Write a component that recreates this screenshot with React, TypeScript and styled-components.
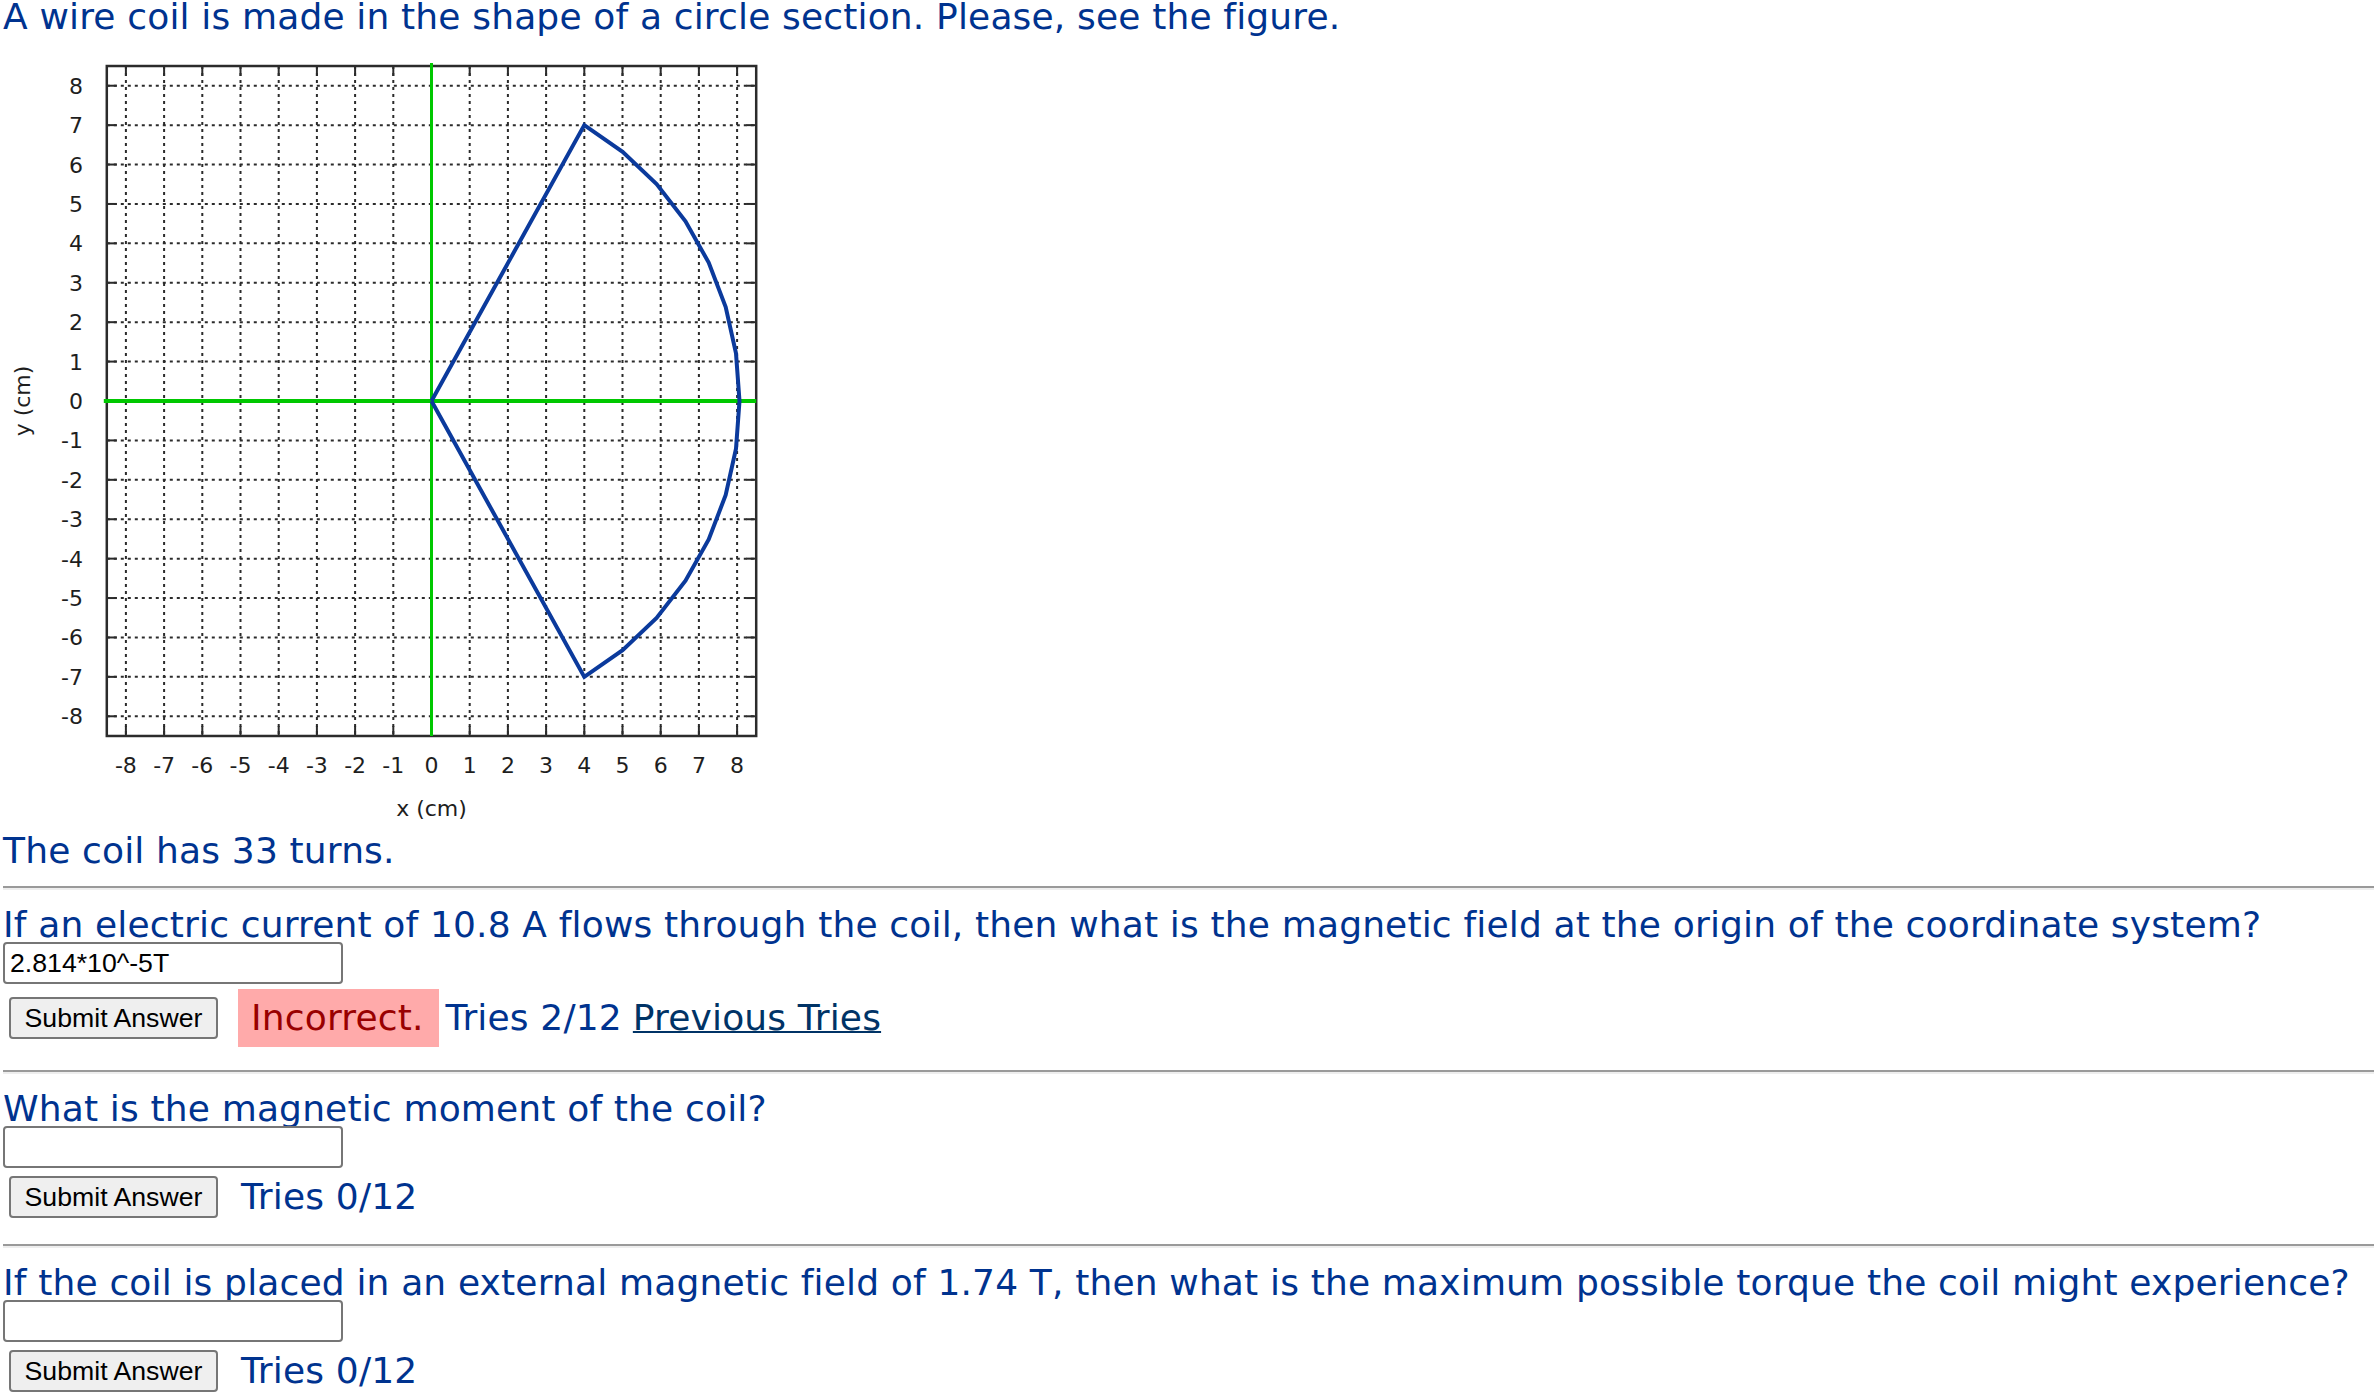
import React from "react";
import styled, { createGlobalStyle } from "styled-components";

const GlobalStyle = createGlobalStyle`
  html, body {
    margin: 0;
    padding: 0;
    background: #ffffff;
  }
`;

const TEXT = "#00338f";
const AXIS = "#2b2b2b";

const Page = styled.div`
  padding-left: 3px;
  color: ${TEXT};
  font-family: "DejaVu Sans", Verdana, sans-serif;
  font-size: 36px;
  letter-spacing: 0.16px;
`;

const Para = styled.div<{ $after?: number }>`
  line-height: 34px;
  white-space: nowrap;
  margin-bottom: ${(p) => p.$after ?? 0}px;
`;

const Rule = styled.hr`
  margin: 18px 0 18px;
  height: 0;
  border: 0;
  border-top: 2px solid #9a9a9a;
  border-bottom: 2px solid #eeeeee;
`;

const Question = styled.div`
  display: flex;
  flex-direction: column;
  align-items: flex-start;
`;

const AnswerInput = styled.input`
  box-sizing: border-box;
  width: 340px;
  height: 42px;
  margin: 0;
  padding: 0 5px;
  border: 2px solid #767676;
  border-radius: 4px;
  background: #ffffff;
  color: #000000;
  font-family: "Liberation Sans", Arial, sans-serif;
  font-size: 26.67px;
  letter-spacing: 0;
  outline: none;
`;

const ButtonRow = styled.div`
  display: flex;
  align-items: center;
  min-height: 58px;
  white-space: nowrap;
`;

const SubmitButton = styled.button`
  box-sizing: border-box;
  width: 209px;
  height: 42px;
  margin: 0 0 0 6px;
  padding: 0;
  border: 2px solid #767676;
  border-radius: 4px;
  background: #efefef;
  color: #000000;
  font-family: "Liberation Sans", Arial, sans-serif;
  font-size: 26.67px;
  letter-spacing: 0;
`;

const Badge = styled.span`
  display: block;
  height: 58px;
  margin: 5px 0 5px 20px;
  padding: 0 15px 0 13px;
  line-height: 58px;
  background: #ffaaaa;
  color: #990000;
`;

const Tries = styled.span<{ $gap: number }>`
  margin-left: ${(p) => p.$gap}px;
  line-height: 58px;
`;

const PrevLink = styled.a`
  margin-left: 11px;
  line-height: 58px;
  color: #003366;
  text-decoration: underline;
  text-decoration-thickness: 2px;
`;

const Figure = styled.svg`
  display: block;
  width: 780px;
  height: 800px;
  font-family: "DejaVu Sans", Verdana, sans-serif;
  letter-spacing: 0;
`;

// plot geometry in svg units
const UX = 38.2;
const UY = 39.41;
const X0 = 428.5;
const Y0 = 367;
const px = (v: number) => X0 + v * UX;
const py = (v: number) => Y0 - v * UY;
const LEFT = px(-8.5);
const RIGHT = px(8.5);
const TOP = py(8.5);
const BOTTOM = py(-8.5);
const TICK = 10;
const values = Array.from({ length: 17 }, (_, i) => i - 8);

const coilPoints = (() => {
  const r = Math.sqrt(65);
  const a = Math.atan2(7, 4);
  const pts: string[] = [`${px(0)},${py(0)}`];
  const n = 14;
  for (let i = 0; i <= n; i++) {
    const t = a - (2 * a * i) / n;
    pts.push(`${px(r * Math.cos(t)).toFixed(1)},${py(r * Math.sin(t)).toFixed(1)}`);
  }
  pts.push(`${px(0)},${py(0)}`);
  return pts.join(" ");
})();

const Chart = () => (
  <Figure viewBox="0 0 780 800">
    {values.map((v) => (
      <g key={`g${v}`} stroke={AXIS} strokeWidth={2} strokeDasharray="3 4">
        <line x1={px(v)} y1={TOP} x2={px(v)} y2={BOTTOM} />
        <line x1={LEFT} y1={py(v)} x2={RIGHT} y2={py(v)} />
      </g>
    ))}
    {values.map((v) => (
      <g key={`t${v}`} stroke={AXIS} strokeWidth={2}>
        <line x1={px(v)} y1={TOP} x2={px(v)} y2={TOP + TICK} />
        <line x1={px(v)} y1={BOTTOM} x2={px(v)} y2={BOTTOM - TICK} />
        <line x1={LEFT} y1={py(v)} x2={LEFT + TICK} y2={py(v)} />
        <line x1={RIGHT} y1={py(v)} x2={RIGHT - TICK} y2={py(v)} />
      </g>
    ))}
    <rect
      x={LEFT}
      y={TOP}
      width={RIGHT - LEFT}
      height={BOTTOM - TOP}
      fill="none"
      stroke={AXIS}
      strokeWidth={2.5}
    />
    <line x1={px(0)} y1={TOP - 3} x2={px(0)} y2={BOTTOM} stroke="#00c800" strokeWidth={3} />
    <line x1={LEFT - 3} y1={py(0)} x2={RIGHT} y2={py(0)} stroke="#00c800" strokeWidth={4} />
    <polyline
      points={coilPoints}
      fill="none"
      stroke="#0b3a9c"
      strokeWidth={4}
      strokeLinejoin="miter"
    />
    {values.map((v) => (
      <text key={`yl${v}`} x={80} y={py(v) + 8} fontSize={22} fill="#1e1e1e" textAnchor="end">
        {v}
      </text>
    ))}
    {values.map((v) => (
      <text key={`xl${v}`} x={px(v)} y={739} fontSize={22} fill="#1e1e1e" textAnchor="middle">
        {v}
      </text>
    ))}
    <text x={px(0)} y={782} fontSize={22} fill="#1e1e1e" textAnchor="middle">
      x (cm)
    </text>
    <text
      x={0}
      y={0}
      fontSize={22}
      fill="#1e1e1e"
      textAnchor="middle"
      transform={`translate(27 ${py(0)}) rotate(-90)`}
    >
      y (cm)
    </text>
  </Figure>
);

type Status = { tries: number; incorrect?: boolean; previous?: boolean };

const Block = ({ text, value, status }: { text: string; value?: string; status: Status }) => (
  <Question>
    <Para>{text}</Para>
    <AnswerInput defaultValue={value ?? ""} />
    <ButtonRow>
      <SubmitButton>Submit Answer</SubmitButton>
      {status.incorrect && <Badge>Incorrect.</Badge>}
      <Tries $gap={status.incorrect ? 7 : 23}>Tries {status.tries}/12</Tries>
      {status.previous && <PrevLink href="#">Previous Tries</PrevLink>}
    </ButtonRow>
  </Question>
);

export default function App() {
  return (
    <>
      <GlobalStyle />
      <Page>
        <Para>A wire coil is made in the shape of a circle section. Please, see the figure.</Para>
        <Chart />
        <Para $after={2}>The coil has 33 turns.</Para>
        <Rule />
        <Block
          text="If an electric current of 10.8 A flows through the coil, then what is the magnetic field at the origin of the coordinate system?"
          value="2.814*10^-5T"
          status={{ tries: 2, incorrect: true, previous: true }}
        />
        <Rule />
        <Block text="What is the magnetic moment of the coil?" status={{ tries: 0 }} />
        <Rule />
        <Block
          text="If the coil is placed in an external magnetic field of 1.74 T, then what is the maximum possible torque the coil might experience?"
          status={{ tries: 0 }}
        />
      </Page>
    </>
  );
}
